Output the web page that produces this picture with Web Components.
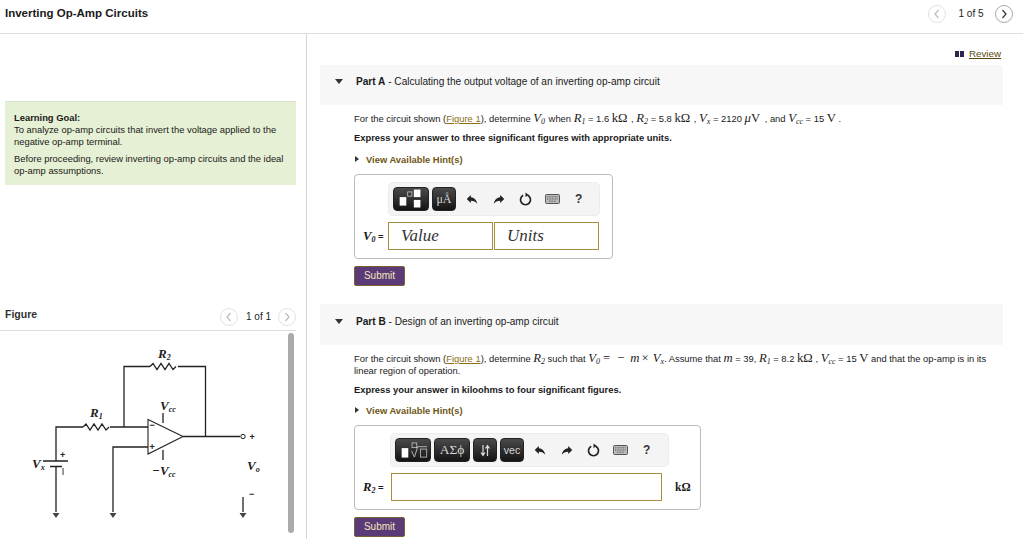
<!DOCTYPE html>
<html>
<head>
<meta charset="utf-8">
<title>Inverting Op-Amp Circuits</title>
<style>
    html, body { margin: 0; height: 100%; overflow: hidden; background: #fff; }
    body { font-family: "Liberation Sans", Arial, sans-serif; font-size: 9.4px; color: #1a1a1a; }
</style>
</head>
<body>
<x-app>
    <x-topbar slot="top">Inverting Op-Amp Circuits</x-topbar>

    <x-goal slot="left">
        <b>Learning Goal:</b><br>
        To analyze op-amp circuits that invert the voltage applied to the negative op-amp terminal.
        <x-para top="5">Before proceeding, review inverting op-amp circuits and the ideal op-amp assumptions.</x-para>
    </x-goal>
    <x-figure slot="left"></x-figure>

    <x-review slot="right"></x-review>

    <x-part slot="right" heading="Part A" sub="Calculating the output voltage of an inverting op-amp circuit" head-h="40" head-pad="11">
        <x-para top="7">For the circuit shown (<x-link>Figure 1</x-link>), determine <x-math sub="0" mr="1">V</x-math> when <x-math sub="1">R</x-math> = 1.6 <x-math up mr="1">kΩ</x-math> , <x-math sub="2">R</x-math> = 5.8 <x-math up mr="1">kΩ</x-math> , <x-math sub="x">V</x-math> = 2120 <x-math>μ</x-math><x-math up mr="2">V</x-math> , and <x-math sub="cc">V</x-math> = 15 <x-math up>V</x-math> .</x-para>
        <x-para top="7" strong>Express your answer to three significant figures with appropriate units.</x-para>
        <x-hint top="9"></x-hint>
        <x-answer width="259" set="a" top="9">
            <x-math slot="label" sub="0">V</x-math>
            <x-field slot="field" grow="105" placeholder="Value"></x-field>
            <x-field slot="field" grow="105" placeholder="Units"></x-field>
        </x-answer>
        <x-submit top="7"></x-submit>
    </x-part>

    <x-part slot="right" heading="Part B" sub="Design of an inverting op-amp circuit" head-h="41" head-pad="12" top="18">
        <x-para top="7">For the circuit shown (<x-link>Figure 1</x-link>), determine <x-math sub="2">R</x-math> such that <x-math sub="0">V</x-math><x-math up ml="3" mr="7">=</x-math><x-math up mr="6">−</x-math><x-math mr="2">m</x-math><x-math up mr="4">×</x-math><x-math sub="x">V</x-math>. Assume that <x-math>m</x-math> = 39, <x-math sub="1">R</x-math> = 8.2 <x-math up>kΩ</x-math> , <x-math sub="cc">V</x-math> = 15 <x-math up>V</x-math> and that the op-amp is in its<br>linear region of operation.</x-para>
        <x-para top="7" strong>Express your answer in kiloohms to four significant figures.</x-para>
        <x-hint top="8"></x-hint>
        <x-answer width="347" set="b" unit="kΩ" top="9">
            <x-math slot="label" sub="2">R</x-math>
            <x-field slot="field" grow="271"></x-field>
        </x-answer>
        <x-submit top="7"></x-submit>
    </x-part>
</x-app>

<script>
// whitespace between <style> and <slot> at shadow root level would render as a space
const define = (name, html, extra = {}) => {
    const template = document.createElement('template');
    template.innerHTML = html.trim();
    [...template.content.childNodes].forEach((n) => {
        if (n.nodeType === 3 && !n.textContent.trim()) n.remove();
    });
    customElements.define(name, class extends HTMLElement {
        constructor() {
            super();
            this.attachShadow({ mode: 'open' });
            this.shadowRoot.appendChild(template.content.cloneNode(true));
            if (extra.init) extra.init(this);
            if (this.hasAttribute('top')) this.style.marginTop = this.getAttribute('top') + 'px';
        }
    });
};

const chevron = (dir) => `<svg width="8" height="10" viewBox="0 0 8 10" fill="none" stroke="currentColor" stroke-width="1.2">
    <path d="${dir === 'left' ? 'M5.5 1 L2 5 L5.5 9' : 'M2.5 1 L6 5 L2.5 9'}"/></svg>`;

define('x-app', `
<style>
    :host { display: grid; grid-template-columns: 306px 1fr; grid-template-rows: 34px 505px; height: 539px; overflow: hidden; }
    .top { grid-column: 1 / 3; }
    .left { overflow: hidden; }
    .right { border-left: 1px solid #d9d2d4; padding: 0 20px 0 13px; overflow: hidden; }
</style>
<div class="top"><slot name="top"></slot></div>
<div class="left"><slot name="left"></slot></div>
<div class="right"><slot name="right"></slot></div>
`);

define('x-pager', `
<style>
    :host { display: flex; align-items: center; font-size: 10px; color: #222; }
    button { all: unset; box-sizing: border-box; width: 18px; height: 18px; border-radius: 50%; border: 1px solid #e2e2e2; display: flex; align-items: center; justify-content: center; color: #bbb; }
    button.on { border-color: #aaa; color: #333; }
    span { text-align: center; padding-left: 1px; box-sizing: border-box; }
</style>
<button id="p">${chevron('left')}</button>
<span id="t"></span>
<button id="n">${chevron('right')}</button>
`, {
    init(el) {
        const root = el.shadowRoot;
        root.getElementById('t').textContent = el.getAttribute('label');
        root.getElementById('t').style.width = el.getAttribute('mid') + 'px';
        if (el.hasAttribute('next-on')) root.getElementById('n').className = 'on';
    }
});

define('x-topbar', `
<style>
    :host { display: flex; justify-content: space-between; align-items: center; box-sizing: border-box; height: 34px; border-bottom: 1px solid #ddd; padding: 0 10px 6px 5px; }
    b { font-size: 11.5px; margin-top: -2px; }
</style>
<b><slot></slot></b>
<x-pager label="1 of 5" mid="49" next-on></x-pager>
`);

define('x-goal', `
<style>
    :host { display: block; box-sizing: border-box; width: 291px; height: 84px; margin: 67px 0 0 5px; padding: 10px 9px; background: #e6f0d4; line-height: 12px; border-top: 1px solid #dfe6d0; }
</style>
<slot></slot>
`);

define('x-para', `
<style>
    :host { display: block; line-height: 12px; }
    :host([strong]) { font-weight: bold; }
</style>
<slot></slot>
`);

define('x-link', `
<style>
    :host { display: inline; color: #8a6d14; text-decoration: underline; }
</style>
<slot></slot>
`);

define('x-math', `
<style>
    :host { display: inline; font-family: "Liberation Serif", "Times New Roman", serif; font-style: italic; font-size: 12.7px; }
    :host([up]) { font-style: normal; }
    sub { font-size: 8px; vertical-align: -2px; line-height: 0; }
</style>
<slot></slot><sub id="s"></sub>
`, {
    init(el) {
        el.shadowRoot.getElementById('s').textContent = el.getAttribute('sub') || '';
        if (el.hasAttribute('ml')) el.style.marginLeft = el.getAttribute('ml') + 'px';
        if (el.hasAttribute('mr')) el.style.marginRight = el.getAttribute('mr') + 'px';
    }
});

define('x-figure', `
<style>
    :host { display: block; width: 296px; margin-top: 118px; }
    .head { display: flex; justify-content: space-between; align-items: center; height: 28px; box-sizing: border-box; padding: 2px 0 2px 5px; border-bottom: 1px solid #ddd; }
    b { font-size: 10.5px; color: #333; margin-top: -6px; }
    .body { display: flex; height: 208px; }
    .bar { width: 6px; height: 200px; margin: 2px 2px 0 0; border-radius: 3px; background: #aaa; }
    x-circuit { flex: 1; }
</style>
<div class="head"><b>Figure</b><x-pager label="1 of 1" mid="40"></x-pager></div>
<div class="body"><x-circuit></x-circuit><div class="bar"></div></div>
`);

const zig = (x, y) => `M${x} ${y} l3 -3 l4 6 l4 -6 l4 6 l4 -6 l4 6 l3 -3`;
define('x-circuit', `
<style>
    :host { display: block; }
    svg { display: block; }
    text { font-family: "Liberation Serif", serif; font-style: italic; font-weight: bold; font-size: 13px; fill: #222; }
    .s { font-size: 8px; }
    .p { font-family: "Liberation Sans", sans-serif; font-style: normal; font-size: 9px; }
</style>
<svg width="288" height="208" viewBox="0 331 288 208" fill="none" stroke="#222" stroke-width="1.3">
    <path d="M124 427 V366.5 H150 M178 366.5 H205.5 V436.5"/>
    <path d="${zig(150, 366.5)}"/>
    <path d="M56 512 V467 M56 461 V427 H83 M110 427 H148"/>
    <path d="${zig(83, 427)}"/>
    <path d="M148 419.5 L183 436.5 L148 454 Z" stroke-width="1.1"/>
    <path d="M183 436.5 H240"/>
    <circle cx="243" cy="436.5" r="2.2" stroke-width="1"/>
    <path d="M163 413 V423 M163 450 V460"/>
    <path d="M148 447 H113 V512"/>
    <path d="M43 461 H68 M50 466.5 H62"/>
    <path d="M243 497 V512"/>
    <path d="M52.5 513 H59.500 L56 518 Z M109.500 513 H116.500 L113 518 Z M239.500 513 H246.500 L243 518 Z" fill="#444" stroke="none"/>
    <g stroke="none">
        <text x="158" y="358">R<tspan class="s" dy="2">2</tspan></text>
        <text x="90" y="417">R<tspan class="s" dy="2">1</tspan></text>
        <text x="160" y="410">V<tspan class="s" dy="2">cc</tspan></text>
        <text x="152" y="475">−V<tspan class="s" dy="2">cc</tspan></text>
        <text x="32" y="468">V<tspan class="s" dy="2">x</tspan></text>
        <text x="247" y="470">V<tspan class="s" dy="2">o</tspan></text>
        <text class="p" x="249.500" y="440">+</text>
        <text class="p" x="60" y="458">+</text>
        <text class="p" x="149.500" y="428">−</text>
        <text class="p" x="149.500" y="450">+</text>
        <text class="p" x="249" y="497">−</text>
        <text class="p" x="62" y="473" style="font-size:7px">|</text>
    </g>
</svg>
`);

define('x-review', `
<style>
    :host { display: flex; justify-content: flex-end; align-items: center; height: 31px; box-sizing: border-box; padding: 8px 2px 0 0; gap: 5px; font-size: 9.8px; }
    u { color: #5a4a10; }
    svg { display: block; }
</style>
<svg width="9" height="6" viewBox="0 0 9 6"><path d="M0 0 H4 V6 H0 Z M5 0 H9 V6 H5 Z" fill="#2e2550"/></svg>
<u>Review</u>
`);

define('x-part', `
<style>
    :host { display: block; }
    .head { display: flex; align-items: flex-start; background: #f7f7f7; padding: 11px 0 0 15px; box-sizing: border-box; line-height: 12px; font-size: 10.1px; }
    .tri { width: 0; height: 0; border: 4px solid transparent; border-top: 5px solid #333; border-bottom: 0; margin: 3px 13px 0 0; }
    .body { padding-left: 34px; }
    b { font-weight: bold; }
</style>
<div class="head" id="h"><div class="tri"></div><div><b id="a"></b> - <span id="b"></span></div></div>
<div class="body"><slot></slot></div>
`, {
    init(el) {
        const root = el.shadowRoot;
        const head = root.getElementById('h');
        root.getElementById('a').textContent = el.getAttribute('heading');
        root.getElementById('b').textContent = el.getAttribute('sub');
        head.style.height = el.getAttribute('head-h') + 'px';
        head.style.paddingTop = el.getAttribute('head-pad') + 'px';
    }
});

define('x-hint', `
<style>
    :host { display: flex; align-items: center; height: 12px; font-weight: bold; color: #6d5714; font-size: 9.4px; }
    i { width: 0; height: 0; border: 3.5px solid transparent; border-left: 4px solid #333; border-right: 0; margin: 0 7px 0 1px; }
</style>
<i></i><span>View Available Hint(s)</span>
`);

const reply = '<path d="M10 9V5l-7 7 7 7v-4.100c5 0 8.500 1.600 11 5.100-1-5-4-10-11-11z"/>';
const tools = `
<span class="t"><svg width="14" height="14" viewBox="0 0 24 24" fill="#222">${reply}</svg></span>
<span class="t"><svg width="14" height="14" viewBox="0 0 24 24" fill="#222" style="transform:scaleX(-1)">${reply}</svg></span>
<span class="t"><svg width="13" height="14" viewBox="0 0 13 14" fill="none" stroke="#222" stroke-width="1.700"><path d="M4.200 3.300 A5 5 0 1 0 8.800 3.300"/><path d="M6.500 0.500 L9.800 3 L6.500 5 Z" fill="#222" stroke="none"/></svg></span>
<span class="t"><svg width="15" height="10" viewBox="0 0 15 10"><rect x="0.500" y="0.500" width="14" height="9" rx="1" fill="#bbb" stroke="#555"/><path d="M2 2.800 H13 M2 5 H13 M4 7.200 H11" stroke="#555" stroke-width="0.900" stroke-dasharray="1 0.600"/></svg></span>
<span class="t q">?</span>`;

const setA = `
<span class="b" style="width:36px"><svg width="36" height="24" viewBox="0 0 36 24"><rect x="6" y="10" width="7" height="9" fill="#fff"/><rect x="14.500" y="4.500" width="4.500" height="4.500" fill="none" stroke="#ccc" stroke-width="0.800"/><rect x="21" y="2" width="7" height="8" fill="#fff"/><rect x="21" y="13" width="7" height="8" fill="#fff"/></svg></span>
<span class="b s" style="width:24px">μÅ</span>`;
const setB = `
<span class="b" style="width:36px"><svg width="36" height="24" viewBox="0 0 36 24"><rect x="6" y="10" width="7" height="10" fill="#fff"/><rect x="17" y="4.500" width="5" height="5" fill="none" stroke="#ccc" stroke-width="0.800"/><path d="M16.500 13 L19.500 19.500 L23 8.500 H33" fill="none" stroke="#ddd" stroke-width="0.800"/><rect x="26" y="11" width="6.500" height="8.500" fill="none" stroke="#ccc" stroke-width="0.800"/></svg></span>
<span class="b s w" style="width:36px">ΑΣϕ</span>
<span class="b" style="width:24px"><svg width="12" height="13" viewBox="0 0 12 13" fill="none" stroke="#ddd" stroke-width="1.200"><path d="M4 1 V11 M2 8.500 L4 11.500 L6 8.500 M8.500 12 V2 M6.500 4.500 L8.500 1.500 L10.500 4.500"/></svg></span>
<span class="b v" style="width:24px">vec</span>`;

define('x-answer', `
<style>
    :host { display: block; box-sizing: border-box; height: 85px; padding-top: 7px; border: 1px solid #bbb; border-radius: 4px; }
    .bar { display: flex; align-items: center; box-sizing: border-box; height: 34px; padding-left: 4px; background: #f4f4f5; border: 1px solid #ececec; border-radius: 5px; }
    .b { display: flex; align-items: center; justify-content: center; height: 24px; margin-right: 3px; box-sizing: border-box; border-radius: 4px; background: linear-gradient(#4a4a4a, #141414); color: #d8d8d8; border: 1px solid #222; }
    .s { font-family: "Liberation Serif", serif; font-size: 12px; }
    .w { font-size: 13.500px; }
    .v { font-size: 10.500px; }
    .t { display: flex; align-items: center; justify-content: center; width: 26.600px; }
    .q { font-weight: bold; font-size: 12px; color: #333; }
    .row { display: flex; align-items: center; margin-top: 6px; height: 28px; }
    .label { box-sizing: border-box; padding-left: 8px; font-size: 9.500px; font-weight: bold; white-space: nowrap; }
    .unit { margin-left: 13px; font-family: "Liberation Serif", serif; font-weight: bold; font-size: 11.500px; }
    .fields { display: flex; gap: 1px; }
</style>
<div class="bar" id="bar"></div>
<div class="row">
    <div class="label" id="l"><slot name="label"></slot> =</div>
    <div class="fields"><slot name="field"></slot></div>
    <div class="unit" id="u"></div>
</div>
`, {
    init(el) {
        const root = el.shadowRoot;
        const isA = el.getAttribute('set') === 'a';
        const bar = root.getElementById('bar');
        bar.innerHTML = (isA ? setA : setB) + tools;
        bar.style.width = (isA ? 212 : 279) + 'px';
        bar.style.marginLeft = (isA ? 33 : 35) + 'px';
        root.getElementById('l').style.width = (isA ? 34 : 36) + 'px';
        root.getElementById('u').textContent = el.getAttribute('unit') || '';
        el.style.width = el.getAttribute('width') + 'px';
    }
});

define('x-field', `
<style>
    :host { display: block; box-sizing: border-box; height: 28px; border: 1px solid #a88f3e; padding-left: 12px; font: italic 17px/26px "Liberation Serif", serif; color: #333; background: #fff; }
</style>
<span id="p"></span>
`, {
    init(el) {
        el.shadowRoot.getElementById('p').textContent = el.getAttribute('placeholder') || '';
        el.style.width = el.getAttribute('grow') + 'px';
    }
});

define('x-submit', `
<style>
    :host { display: block; box-sizing: border-box; width: 51px; height: 20px; line-height: 18px; text-align: center; background: #5b3a78; border: 1px solid #7a5f33; border-radius: 2px; color: #f2e8b8; font-size: 10px; }
</style>
Submit
`);
</script>
</body>
</html>
